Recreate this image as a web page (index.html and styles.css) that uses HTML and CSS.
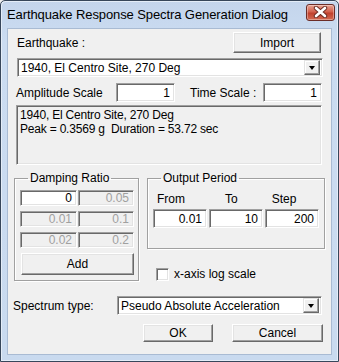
FILE: index.html
```html
<!DOCTYPE html>
<html lang="en">
    <head>
        <meta charset="UTF-8" />
        <title>Earthquake Response Spectra Generation Dialog</title>
        <link rel="stylesheet" href="styles.css">
    </head>
    <body>
        <div class="window">
            <div class="titlebar">
                <span class="title">Earthquake Response Spectra Generation Dialog</span>
                <button class="close-btn" aria-label="Close">
                    <svg width="15" height="12" viewBox="0 0 15 12">
                        <path d="M3 2 L12 10 M12 2 L3 10" stroke="#6a2a22" stroke-width="4.4" stroke-linecap="round" fill="none"/>
                        <path d="M3 2 L12 10 M12 2 L3 10" stroke="#fff" stroke-width="2.6" stroke-linecap="round" fill="none"/>
                    </svg>
                </button>
            </div>

            <div class="client">
                <div class="row row-import">
                    <span class="label label-eq">Earthquake :</span>
                    <button class="btn btn-import">Import</button>
                </div>

                <div class="combo combo-eq">
                    <span class="combo-text">1940, El Centro Site, 270 Deg</span>
                    <span class="combo-arrow"></span>
                </div>

                <div class="row row-scale">
                    <span class="label label-amp">Amplitude Scale</span>
                    <div class="field field-scale">1</div>
                    <span class="label label-time">Time Scale :</span>
                    <div class="field field-scale">1</div>
                </div>

                <div class="info">
                    1940, El Centro Site, 270 Deg<br>
                    Peak = 0.3569 g&nbsp;&nbsp;Duration = 53.72 sec
                </div>

                <div class="groups">
                    <fieldset class="group group-damping">
                        <legend>Damping Ratio</legend>
                        <div class="damp-grid">
                            <div class="field field-damp">0</div>
                            <div class="field field-damp disabled">0.05</div>
                            <div class="field field-damp disabled">0.01</div>
                            <div class="field field-damp disabled">0.1</div>
                            <div class="field field-damp disabled">0.02</div>
                            <div class="field field-damp disabled">0.2</div>
                        </div>
                        <button class="btn btn-add">Add</button>
                    </fieldset>

                    <div class="right-col">
                        <fieldset class="group group-period">
                            <legend>Output Period</legend>
                            <div class="period-labels">
                                <span class="plabel plabel-from">From</span>
                                <span class="plabel plabel-to">To</span>
                                <span class="plabel plabel-step">Step</span>
                            </div>
                            <div class="period-fields">
                                <div class="field field-period">0.01</div>
                                <div class="field field-period">10</div>
                                <div class="field field-period">200</div>
                            </div>
                        </fieldset>

                        <label class="check-row">
                            <span class="checkbox"></span>
                            <span class="check-label">x-axis log scale</span>
                        </label>
                    </div>
                </div>

                <div class="row row-spectrum">
                    <span class="label label-spec">Spectrum type:</span>
                    <div class="combo combo-spec">
                        <span class="combo-text">Pseudo Absolute Acceleration</span>
                        <span class="combo-arrow"></span>
                    </div>
                </div>

                <div class="row row-buttons">
                    <button class="btn btn-ok">OK</button>
                    <button class="btn btn-cancel">Cancel</button>
                </div>
            </div>
        </div>
    </body>
</html>
```

FILE: styles.css
```css
* {
    margin: 0;
    padding: 0;
    box-sizing: border-box;
}

body {
    font-family: 'Liberation Sans', Arial, sans-serif;
    font-size: 12px;
    color: #000;
    background-color: #f0f0f0;
}

.window {
    width: 339px;
    height: 362px;
    border: 1px solid #37465a;
    border-radius: 5px 5px 0 0;
    background: linear-gradient(#c4d5ec, #cbdcf1 40px, #c9daef);
    padding: 0 6px 6px;
    display: flex;
    flex-direction: column;
    box-shadow: inset 1px 1px #e4edf8, inset -1px -1px #e4edf8;
}

.titlebar {
    height: 27px;
    display: flex;
    align-items: center;
    justify-content: space-between;
    padding-bottom: 1px;
}

.title {
    font-size: 13px;
    color: #000;
    letter-spacing: -0.1px;
}

.close-btn {
    width: 29px;
    height: 17px;
    margin-right: -3px;
    margin-top: -4px;
    border: 1px solid #6b2d28;
    border-radius: 3px;
    background: linear-gradient(#e8a493, #d2604c 45%, #c0412e 55%, #d36a52);
    display: flex;
    align-items: center;
    justify-content: center;
    box-shadow: inset 0 0 0 1px rgba(255, 255, 255, 0.35);
}

.client {
    flex: 1;
    background-color: #f0f0f0;
    border: 1px solid #a9bbd3;
    padding: 3px 9px 0 8px;
    display: flex;
    flex-direction: column;
}

.row {
    display: flex;
    align-items: center;
}

.label {
    white-space: nowrap;
}

/* classic 3D edges */
.btn {
    font-family: inherit;
    font-size: 12px;
    color: #000;
    background-color: #f0f0f0;
    border: 1px solid;
    border-color: #fff #696969 #696969 #fff;
    box-shadow: inset -1px -1px #a0a0a0, inset 1px 1px #e3e3e3;
    display: flex;
    align-items: center;
    justify-content: center;
}

.field {
    background-color: #fff;
    border: 1px solid;
    border-color: #a0a0a0 #fff #fff #a0a0a0;
    box-shadow: inset 1px 1px #696969, inset -1px -1px #e3e3e3;
    padding: 0 4px 0 0;
    display: flex;
    align-items: center;
    justify-content: flex-end;
}

.field.disabled {
    background-color: #f0f0f0;
    color: #a0a0a0;
}

.row-import {
    height: 21px;
    justify-content: space-between;
}

.label-eq {
    padding-left: 1px;
}

.btn-import {
    width: 88px;
    height: 21px;
    margin-right: 1px;
}

.combo {
    height: 19px;
    background-color: #fff;
    border: 1px solid;
    border-color: #a0a0a0 #fff #fff #a0a0a0;
    box-shadow: inset 1px 1px #696969, inset -1px -1px #e3e3e3;
    display: flex;
    align-items: center;
    justify-content: space-between;
    padding: 2px 2px 2px 3px;
}

.combo-arrow {
    width: 16px;
    height: 15px;
    background-color: #f0f0f0;
    border: 1px solid;
    border-color: #e3e3e3 #696969 #696969 #e3e3e3;
    box-shadow: inset -1px -1px #a0a0a0, inset 1px 1px #fff;
    position: relative;
}

.combo-arrow::after {
    content: '';
    position: absolute;
    left: 4px;
    top: 5px;
    border-left: 3.5px solid transparent;
    border-right: 3.5px solid transparent;
    border-top: 4px solid #000;
}

.combo-eq {
    margin-top: 5px;
    width: 306px;
    margin-left: 1px;
}

.row-scale {
    margin-top: 6px;
    height: 19px;
}

.label-amp {
    width: 100px;
}

.field-scale {
    width: 59px;
    height: 19px;
}

.label-time {
    width: 73px;
    margin-left: 15px;
}

.info {
    margin-top: 3px;
    height: 60px;
    width: 306px;
    border: 1px solid;
    border-color: #a0a0a0 #fff #fff #a0a0a0;
    box-shadow: inset 1px 1px #696969, inset -1px -1px #e3e3e3;
    padding: 2px 3px;
    line-height: 14px;
    letter-spacing: -0.2px;
}

.groups {
    margin-top: 6px;
    margin-left: -2px;
    display: flex;
    align-items: flex-start;
}

.group {
    border: 1px solid #a0a0a0;
    box-shadow: inset 1px 1px #fff, 1px 1px #fff;
    padding: 0;
}

.group legend {
    margin-left: 8px;
    padding: 0 2px;
    line-height: 14px;
}

.group-damping {
    width: 125px;
    padding: 5px 4px 5px 5px;
}

.damp-grid {
    display: grid;
    grid-template-columns: 57px 56px;
    column-gap: 1px;
    row-gap: 5px;
}

.field-damp {
    height: 16px;
}

.btn-add {
    margin-top: 5px;
    margin-left: 1px;
    width: 113px;
    height: 22px;
}

.right-col {
    margin-left: 8px;
    display: flex;
    flex-direction: column;
}

.group-period {
    width: 176px;
    height: 78px;
    padding: 0 5px;
}

.period-labels {
    display: flex;
    height: 16px;
    margin-top: 6px;
    align-items: center;
}

.plabel-from {
    margin-left: 4px;
}

.plabel-to {
    margin-left: 40px;
}

.plabel-step {
    margin-left: 34px;
}

.period-fields {
    margin-top: 2px;
    display: flex;
    gap: 2px;
}

.field-period {
    width: 54px;
    height: 19px;
}

.check-row {
    margin-top: 18px;
    margin-left: 9px;
    display: flex;
    align-items: center;
}

.checkbox {
    width: 13px;
    height: 13px;
    background-color: #fff;
    border: 1px solid;
    border-color: #a0a0a0 #fff #fff #a0a0a0;
    box-shadow: inset 1px 1px #696969, inset -1px -1px #e3e3e3;
}

.check-label {
    margin-left: 5px;
}

.row-spectrum {
    margin-top: 15px;
    height: 19px;
}

.label-spec {
    margin-left: -3px;
    width: 104px;
}

.combo-spec {
    width: 205px;
}

.row-buttons {
    margin-top: 9px;
    justify-content: flex-end;
    margin-right: -1px;
}

.btn-ok {
    width: 70px;
    height: 18px;
}

.btn-cancel {
    margin-left: 19px;
    width: 91px;
    height: 18px;
}
```
